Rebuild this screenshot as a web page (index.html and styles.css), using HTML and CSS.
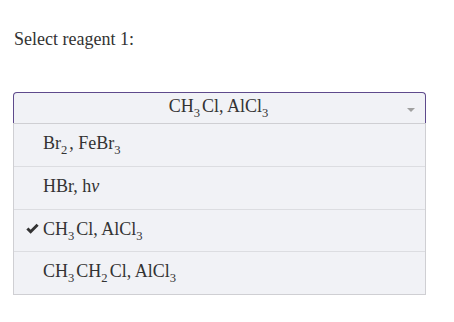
FILE: index.html
```html
<!DOCTYPE html>
<html>
<head>
<meta charset="utf-8">
<link rel="stylesheet" href="styles.css">
</head>
<body>
<div class="page">
  <p class="label">Select reagent 1:</p>
  <div class="select">
    <span class="selected">CH<sub>3</sub>Cl, AlCl<sub>3</sub></span>
    <span class="arrow"></span>
  </div>
  <ul class="list">
    <li class="item"><span class="text">Br<sub>2</sub>, FeBr<sub>3</sub></span></li>
    <li class="item"><span class="text">HBr, h<i class="nu">ν</i></span></li>
    <li class="item"><svg class="check" viewBox="0 0 14 11" width="13" height="11"><path d="M1.5 5.5 L5 9 L12.5 1.5" fill="none" stroke="#333" stroke-width="3.2" stroke-linejoin="miter"/></svg><span class="text">CH<sub>3</sub>Cl, AlCl<sub>3</sub></span></li>
    <li class="item"><span class="text">CH<sub>3</sub>CH<sub>2</sub>Cl, AlCl<sub>3</sub></span></li>
  </ul>
</div>
</body>
</html>
```
FILE: styles.css
```css
html, body {
  margin: 0;
  padding: 0;
  background: #fff;
}
.page {
  padding: 28px 0 0 13px;
  width: 413px;
  font-family: "Liberation Serif", "Times New Roman", serif;
  color: #333;
}
.label {
  margin: 0 0 0 1px;
  font-size: 18px;
  line-height: 22px;
}
.select {
  margin-top: 42px;
  height: 31px;
  box-sizing: border-box;
  border: 1px solid #5e4a8c;
  border-bottom: none;
  border-radius: 4px 4px 0 0;
  background: #f1f2f6;
  display: flex;
  align-items: center;
  justify-content: center;
  position: relative;
}
.selected {
  font-size: 18px;
  line-height: 20px;
  margin-top: -4px;
  color: #333;
}
sub {
  font-size: 0.7em;
  vertical-align: -0.4em;
  line-height: 0;
  margin-right: 2px;
}
.arrow {
  position: absolute;
  right: 10px;
  top: 15px;
  width: 0;
  height: 0;
  border-left: 4px solid transparent;
  border-right: 4px solid transparent;
  border-top: 4px solid #a0a0a0;
}
.list {
  list-style: none;
  margin: 0;
  padding: 0;
  border: 1px solid #cfcfd3;
  background: #f1f2f6;
}
.item {
  height: 43px;
  box-sizing: border-box;
  border-top: 1px solid #dcdde1;
  display: flex;
  align-items: center;
  padding-left: 29px;
  font-size: 18px;
  color: #333;
  position: relative;
}
.item:first-child {
  border-top: none;
  height: 42px;
}
.item:nth-child(3) {
  height: 42px;
}
.text {
  margin-top: -3px;
}
.check {
  position: absolute;
  left: 12px;
  top: 13px;
}
.nu {
  font-style: italic;
}
```
